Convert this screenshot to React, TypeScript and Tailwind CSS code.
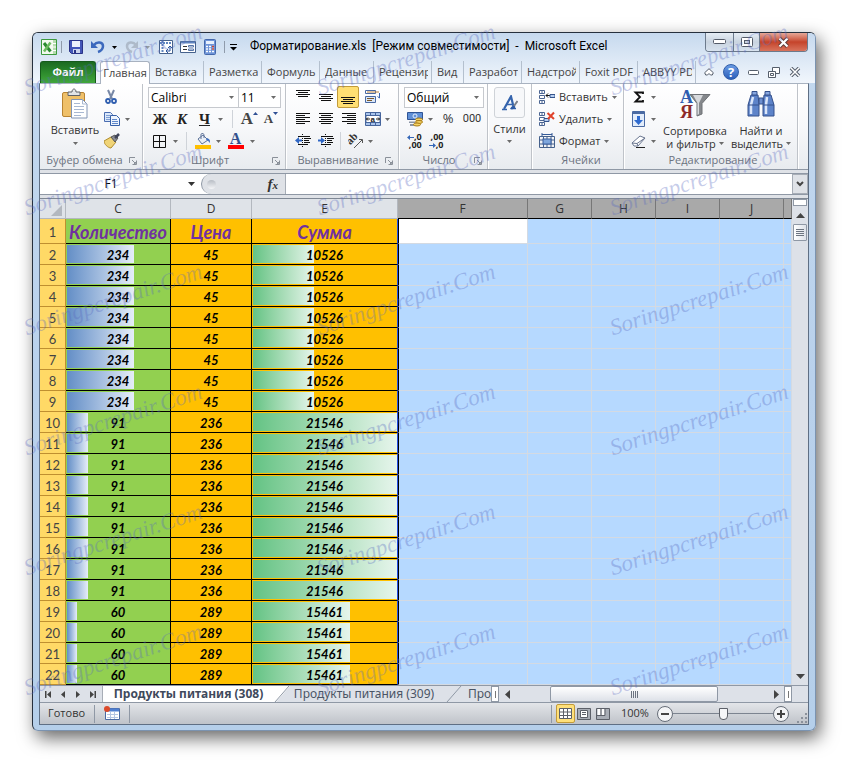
import { ReactNode } from 'react';

interface SheetRow {
  row: number;
  quantity: number;
  price: number;
  total: number;
}

// Data bar width in percent, by value
const quantityBars: Record<number, number> = { 234: 64, 91: 20, 60: 10 };
const totalBars: Record<number, number> = { 10526: 42, 21546: 99, 15461: 67 };

const rows: SheetRow[] = Array.from({ length: 21 }, (_, i) => {
  const row = i + 2;
  if (row < 10) return { row, quantity: 234, price: 45, total: 10526 };
  if (row < 19) return { row, quantity: 91, price: 236, total: 21546 };
  return { row, quantity: 60, price: 289, total: 15461 };
});

function Arrow({ className = '' }: { className?: string }) {
  return (
    <svg className={`w-[5px] h-[3px] shrink-0 ${className}`} viewBox="0 0 5 3" fill="#6b6b6b">
      <path d="M0 0h5L2.5 3z" />
    </svg>
  );
}

function Icon({ children, size = 16 }: { children: ReactNode; size?: number }) {
  return (
    <svg width={size} height={size} viewBox={`0 0 ${size} ${size}`} className="shrink-0" fill="none">
      {children}
    </svg>
  );
}

function IconButton({ label, className = '', children }: { label: string; className?: string; children: ReactNode }) {
  return (
    <button type="button" aria-label={label} className={`flex items-center justify-center shrink-0 h-[22px] ${className}`}>
      {children}
    </button>
  );
}

function Select({ label, value, className = '' }: { label: string; value: string; className?: string }) {
  return (
    <div className={`relative h-[21px] bg-white border border-[#c6c9ce] ${className}`}>
      <select
        aria-label={label}
        className="w-full h-full appearance-none bg-transparent pl-[2px] pr-3 font-['Open_Sans',sans-serif] text-[12px] leading-[19px] text-black"
      >
        <option>{value}</option>
      </select>
      <Arrow className="absolute right-[4px] top-[8px] pointer-events-none" />
    </div>
  );
}

function Divider({ className = 'h-[18px] bg-[#cfd3d9]' }: { className?: string }) {
  return <div className={`w-px shrink-0 ${className}`} />;
}

function Group({ title, className, launcher = false, children }: { title: string; className: string; launcher?: boolean; children: ReactNode }) {
  return (
    <div className={`flex flex-col shrink-0 h-full pt-[2px] border-r border-[#bfc3c9] shadow-[1px_0_0_#fff] ${className}`}>
      <div className="h-[66px]">{children}</div>
      <div className="flex items-center h-[17px] text-[#6b7380]">
        <span className="flex-1 text-center whitespace-nowrap">{title}</span>
        {launcher && (
          <button type="button" aria-label={`${title}: параметры`} className="w-[13px] shrink-0">
            <svg width="8" height="8" viewBox="0 0 8 8" fill="none" stroke="#8a9099">
              <path d="M.5 6V.5H6M3 3l3 3M7.5 3.5v4h-4M6.5 5v1.500H5" />
            </svg>
          </button>
        )}
      </div>
    </div>
  );
}

function Lines({ y, widths, align }: { y: number; widths: number[]; align: 'left' | 'center' | 'right' }) {
  return (
    <Icon>
      {widths.map((w, i) => (
        <rect
          key={i}
          x={align === 'left' ? 1 : align === 'center' ? 8 - w / 2 : 15 - w}
          y={y + i * 2}
          width={w}
          height="1"
          fill="#111"
        />
      ))}
    </Icon>
  );
}

function IndentIcon({ inward = false }: { inward?: boolean }) {
  return (
    <Icon>
      <path d="M3 3.500h12M9 5.500h7M9 7.500h5M9 9.500h6M3 11.500h10" stroke="#111" />
      <path d="M7.500 1v14" stroke="#111" strokeDasharray="1 1" />
      <path d={inward ? 'M0 6.500h3V4L7 7.500 3 11V8.500H0z' : 'M7 6.500H4V4L0 7.500 4 11V8.500h3z'} fill="#2f66c4" />
    </Icon>
  );
}

function CellsIcon({ kind }: { kind: 'insert' | 'delete' | 'format' }) {
  if (kind === 'format') {
    return (
      <Icon>
        <path d="M.5 3.500h15v11H.5zM.5 7h15M.5 11h15M4.500 3v11M8 3v11M12 3v11" stroke="#45618c" />
        <rect x="4" y="6" width="8" height="5" fill="#7fa7dd" stroke="#3a5f9e" />
        <path d="M3 1.500h10M3 0v3M13 0v3" stroke="#345a98" />
      </Icon>
    );
  }
  return (
    <Icon>
      <path d="M.5 1.500h5v3h-5zM.5 6.500h5v3h-5zM.5 11.500h5v3h-5zM3 11.500v3M3 1.500v3" fill="#fff" stroke="#4b6592" />
      {kind === 'insert' ? (
        <>
          <path d="M11 6.500H7m2-2l-2 2 2 2" stroke="#111" />
          <path d="M11 5.500h5v3h-5z" fill="#b9d0f2" stroke="#35548c" />
        </>
      ) : (
        <>
          <path d="M5 7.500h5v3H5z" fill="#b9d0f2" stroke="#35548c" />
          <path d="M8.500 2l6.500 6M15 1.500L9 8" stroke="#e0432b" strokeWidth="2" />
        </>
      )}
    </Icon>
  );
}

function ExcelLogo() {
  return (
    <Icon>
      <path d="M.5.5h15v15H.5z" fill="#f3faf0" stroke="#3d9a3f" />
      <path d="M12 1h3v14h-3z" fill="#b5dcae" />
      <path d="M12 4.500h3M12 8h3M12 11.500h3" stroke="#fff" />
      <path d="M3 4l6.500 8.500" stroke="#2b8a31" strokeWidth="3" />
      <path d="M9.500 3.500L3 12.500" stroke="#6bbb5f" strokeWidth="2.500" />
    </Icon>
  );
}

function TitleBar() {
  return (
    <div className="flex items-start h-[28px] pl-[1px]">
      <div className="flex items-center h-[28px] w-[209px] shrink-0">
        <ExcelLogo />
        <Divider className="h-[12px] ml-[4px] mr-[6px] bg-[#8f9bab]" />
        <button type="button" aria-label="Сохранить" className="mr-[6px]">
          <Icon>
            <path d="M1.500 1.500h13v13h-11l-2-2z" fill="#4456b8" stroke="#2b3487" />
            <path d="M4 2h8v6H4z" fill="#eef2fb" />
            <path d="M5 10h7v4H5z" fill="#cdd5ee" />
            <path d="M6 11h2v3H6z" fill="#2b3487" />
          </Icon>
        </button>
        <button type="button" aria-label="Отменить" className="flex items-center gap-[6px]">
          <Icon>
            <path d="M4 6c3-4 9-3 9 1 0 3-2 5-5 6" stroke="#3c69bd" strokeWidth="2.500" />
            <path d="M1 2v7h7z" fill="#3c69bd" />
          </Icon>
          <svg width="5" height="3" viewBox="0 0 5 3"><path d="M0 0h5L2.500 3z" /></svg>
        </button>
        <button type="button" aria-label="Вернуть" className="flex items-center gap-[5px] ml-[7px] opacity-60">
          <Icon>
            <path d="M12 6c-3-4-9-3-9 1 0 3 2 5 5 6" stroke="#98a2b0" strokeWidth="2.500" />
            <path d="M14 2v7H7z" fill="#98a2b0" />
          </Icon>
          <Arrow />
        </button>
        <button type="button" aria-label="Сводная таблица" className="ml-[8px]">
          <Icon>
            <path d="M1.500 1.500h13v13h-13z" fill="#fff" stroke="#45618c" />
            <path d="M2 4h12M4.500 2v12" stroke="#5f84bf" strokeWidth="2" strokeDasharray="2 1" />
            <path d="M8 12h4V7m-2 2l2-2 2 2M10 10l-2 2 2 2" stroke="#2b549c" />
          </Icon>
        </button>
        <button type="button" aria-label="Форма" className="ml-[6px]">
          <Icon>
            <path d="M.5 2.500h15v11H.5z" fill="#fff" stroke="#45618c" />
            <path d="M1 3.500h14" stroke="#5f84bf" strokeWidth="2" />
            <path d="M3 7.500h4M3 10.500h4" stroke="#333" />
            <path d="M8.500 6.500h5v1.500h-5zM8.500 10h5v1.500h-5z" stroke="#5474a8" />
          </Icon>
        </button>
        <button type="button" aria-label="Калькулятор" className="ml-[6px]">
          <Icon>
            <rect x="2.500" y=".5" width="11" height="15" rx="1" fill="#6f95d8" stroke="#4468ac" />
            <path d="M4 2h8v3H4z" fill="#e9f1fd" />
            <path d="M4 7.500h8M4 10h8M4 12.500h8" stroke="#fff" strokeWidth="1.500" strokeDasharray="2 1" />
            <path d="M10 7.500h2M10 10h2" stroke="#c84432" strokeWidth="1.500" />
          </Icon>
        </button>
        <Divider className="h-[12px] ml-[6px] mr-[5px] bg-[#8f9bab]" />
        <button type="button" aria-label="Настройка панели">
          <svg width="7" height="7" viewBox="0 0 7 7"><path d="M0 0h7v1H0zM0 3h7L3.500 6.500z" /></svg>
        </button>
      </div>
      <h1 className="flex-1 min-w-0 h-[26px] leading-[26px] font-['Roboto',sans-serif] text-[12px] text-black whitespace-pre overflow-hidden">
        Форматирование.xls  [Режим совместимости]  -  Microsoft Excel
      </h1>
      <div className="flex shrink-0 h-[19px] border border-t-0 border-[#6c7a8c] rounded-b-[4px] overflow-hidden">
        <button type="button" aria-label="Свернуть" className="w-[28px] flex items-center justify-center border-r border-[#6c7a8c] bg-linear-to-b from-[#e6edf5] via-[#c9d4e0] to-[#d8e3ef]">
          <svg width="13" height="6" viewBox="0 0 13 6"><rect x=".5" y=".5" width="12" height="4" rx="1" fill="#fff" stroke="#545b68" /></svg>
        </button>
        <button type="button" aria-label="Развернуть" className="w-[26px] flex items-center justify-center border-r border-[#6c7a8c] bg-linear-to-b from-[#e6edf5] via-[#c9d4e0] to-[#d8e3ef]">
          <svg width="12" height="10" viewBox="0 0 12 10"><rect x=".5" y=".5" width="11" height="9" rx="1" fill="#fff" stroke="#545b68" /><rect x="3.500" y="3.500" width="5" height="3" fill="#c9d4e0" stroke="#545b68" /></svg>
        </button>
        <button type="button" aria-label="Закрыть" className="w-[47px] flex items-center justify-center bg-linear-to-b from-[#e5a797] via-[#c5432a] to-[#d8735c]">
          <svg width="13" height="11" viewBox="0 0 13 11"><path d="M2.500 1.500l8 8M10.500 1.500l-8 8" stroke="#5b3a38" strokeWidth="4" /><path d="M2.500 1.500l8 8M10.500 1.500l-8 8" stroke="#fff" strokeWidth="2.200" /></svg>
        </button>
      </div>
    </div>
  );
}

const ribbonTabs = [
  { name: 'Вставка', width: 'w-[54px]' },
  { name: 'Разметка', width: 'w-[58px]' },
  { name: 'Формуль', width: 'w-[58px]' },
  { name: 'Данные', width: 'w-[54px]' },
  { name: 'Рецензир', width: 'w-[58px]' },
  { name: 'Вид', width: 'w-[32px]' },
  { name: 'Разработ', width: 'w-[58px]' },
  { name: 'Надстрой', width: 'w-[58px]' },
  { name: 'Foxit PDF', width: 'w-[58px]' },
  { name: 'ABBYY PD', width: 'w-[58px]' },
];

function RibbonTabs() {
  return (
    <nav className="flex items-end h-[22px] text-[#444]">
      <button type="button" className="w-[56px] h-[22px] mr-[4px] shrink-0 font-bold text-white bg-linear-to-b from-[#1b6a21] via-[#2c8a2c] to-[#41a73c] border border-b-0 border-[#155a1a] rounded-t-[3px]">
        Файл
      </button>
      <button type="button" className="w-[50px] h-[23px] -mb-px shrink-0 bg-white border border-b-0 border-[#a8b2c0] rounded-t-[3px] relative">
        Главная
      </button>
      {ribbonTabs.map((tab) => (
        <button key={tab.name} type="button" className={`h-[22px] pl-[5px] pr-[3px] shrink-0 border-r border-[#b4c0ce] ${tab.width}`}>
          <span className="block overflow-hidden whitespace-nowrap text-left">{tab.name}</span>
        </button>
      ))}
      <div className="flex items-center h-[22px] ml-[8px] gap-[9px]">
        <button type="button" aria-label="Свернуть ленту">
          <svg width="10" height="8" viewBox="0 0 10 8"><path d="M5 .7l4.300 4-1 2.300H6.500L5 5.500 3.500 7H1.700l-1-2.300z" fill="#fff" stroke="#555e6b" /></svg>
        </button>
        <button type="button" aria-label="Справка" className="w-[16px] h-[16px] rounded-full bg-linear-to-b from-[#6a9be3] to-[#2c5fba] border border-[#2f5da8] text-white text-[13px] leading-[14px] font-bold">
          ?
        </button>
        <button type="button" aria-label="Свернуть книгу">
          <svg width="11" height="5" viewBox="0 0 11 5"><rect x=".5" y=".5" width="10" height="4" rx="1" fill="#fff" stroke="#555e6b" /></svg>
        </button>
        <button type="button" aria-label="Восстановить книгу">
          <svg width="12" height="11" viewBox="0 0 12 11" fill="#fff" stroke="#555e6b"><path d="M4.500.5h7v6h-7z" /><path d="M.5 4.500h7v6h-7z" /><path d="M2.500 6.500h3v2h-3z" /></svg>
        </button>
        <button type="button" aria-label="Закрыть книгу">
          <svg width="12" height="10" viewBox="0 0 12 10"><path d="M2 1l8 8M10 1L2 9" stroke="#555e6b" strokeWidth="3.500" /><path d="M2 1l8 8M10 1L2 9" stroke="#fff" strokeWidth="1.500" /></svg>
        </button>
      </div>
    </nav>
  );
}

function ClipboardGroup() {
  return (
    <Group title="Буфер обмена" className="w-[103px]" launcher>
      <div className="flex">
        <button type="button" className="w-[62px] pl-[8px] h-[66px] flex flex-col items-center shrink-0">
          <svg width="28" height="32" viewBox="0 0 28 32" fill="none" className="mt-[2px]">
            <rect x="1.500" y="4.500" width="22" height="24" rx="1.500" fill="#efc069" stroke="#b98432" />
            <path d="M7 7.500V4h4c0-4 4-4 4 0h4v3.500z" fill="#e1e4e8" stroke="#5e6268" />
            <path d="M10.500 11.500h11l4.500 4.500v14H10.500z" fill="#fff" stroke="#8194b4" />
            <path d="M21.500 11.500V16H26M13 15.500h6M13 18.500h10M13 21.500h10M13 24.500h10M13 27.500h7" stroke="#a8b8d2" />
          </svg>
          <span className="leading-[14px] mt-[3px]">Вставить</span>
          <Arrow className="mt-[5px]" />
        </button>
        <div>
          <IconButton label="Вырезать" className="w-[18px]">
            <Icon>
              <path d="M5 1l4 9M11 1L7 10" stroke="#7888a6" strokeWidth="2" />
              <circle cx="5" cy="12" r="2" stroke="#2f5eaf" strokeWidth="1.800" />
              <circle cx="11" cy="12" r="2" stroke="#2f5eaf" strokeWidth="1.800" />
            </Icon>
          </IconButton>
          <IconButton label="Копировать" className="gap-[5px] pl-[2px]">
            <Icon>
              <path d="M.5 1.500h6l2 2v7h-8z" fill="#dbe8fa" stroke="#4a6db0" />
              <path d="M2 4.500h4M2 6.500h4M2 8.500h4" stroke="#7f9fd4" />
              <path d="M6.500 4.500h6l3 3v7h-9z" fill="#eef4fd" stroke="#3760a8" />
              <path d="M8 8.500h5M8 10.500h6M8 12.500h6" stroke="#5f88cb" />
            </Icon>
            <Arrow />
          </IconButton>
          <IconButton label="Формат по образцу" className="w-[20px]">
            <Icon>
              <path d="M0 8l7-4 5 5-5 6c-3 0-7-4-7-7z" fill="#f0d477" stroke="#b08c2c" />
              <path d="M7 4l4-2 3 3-3 4z" fill="#8c8f96" stroke="#555" />
              <path d="M11 5l4-4" stroke="#40455a" strokeWidth="2.500" />
            </Icon>
          </IconButton>
        </div>
      </div>
    </Group>
  );
}

function FontGroup() {
  return (
    <Group title="Шрифт" className="w-[143px] pl-[5px]" launcher>
      <div className="flex h-[22px] items-center">
        <Select label="Шрифт" value="Calibri" className="w-[91px]" />
        <Select label="Размер" value="11" className="w-[43px] -ml-px" />
      </div>
      <div className="flex h-[22px] items-center text-[#222] font-['Liberation_Serif',serif]">
        <IconButton label="Полужирный" className="w-[24px] text-[15px] font-bold">Ж</IconButton>
        <IconButton label="Курсив" className="w-[20px] text-[15px] font-bold italic">К</IconButton>
        <IconButton label="Подчеркнутый" className="w-[38px] gap-[8px] text-[15px] font-bold">
          <span className="underline">Ч</span>
          <Arrow />
        </IconButton>
        <Divider className="h-[18px] bg-[#cfd3d9] ml-[2px]" />
        <IconButton label="Увеличить размер" className="w-[30px] pl-[3px] text-[17px] font-bold text-[#444]">
          A
          <svg width="5" height="3" viewBox="0 0 5 3" className="mb-[12px]"><path d="M0 3h5L2.500 0z" fill="#2f4f94" /></svg>
        </IconButton>
        <IconButton label="Уменьшить размер" className="w-[16px] text-[13px] font-bold text-[#444]">
          A
          <svg width="5" height="3" viewBox="0 0 5 3" className="mb-[12px]"><path d="M0 0h5L2.500 3z" fill="#2f4f94" /></svg>
        </IconButton>
      </div>
      <div className="flex h-[22px] items-center">
        <IconButton label="Границы" className="w-[34px] gap-[7px]">
          <svg width="13" height="13" viewBox="0 0 13 13" fill="none" stroke="#111"><path d="M.5.5h12v12H.5zM6.500 0v13M0 6.500h13" /></svg>
          <Arrow />
        </IconButton>
        <Divider className="h-[18px] bg-[#cfd3d9] ml-[4px]" />
        <IconButton label="Цвет заливки" className="w-[34px] gap-[5px] ml-[4px]">
          <Icon>
            <path d="M3 6l5-4 5 5-6 4z" fill="#e8eef7" stroke="#5e7399" />
            <path d="M6 6V1.500C6 0 9 0 9 2v3" stroke="#5e7399" />
            <path d="M12 5c3 1 3.500 3 2.500 5-1-2-1.500-3-3.500-3z" fill="#3f6fc0" />
            <path d="M0 12h16v4H0z" fill="#ffc000" />
          </Icon>
          <Arrow />
        </IconButton>
        <IconButton label="Цвет текста" className="w-[32px] gap-[6px]">
          <span className="w-[16px] h-[16px] border-b-4 border-[#f00] text-[16px] leading-[12px] font-bold text-[#33518d] font-['Liberation_Serif',serif]">A</span>
          <Arrow />
        </IconButton>
      </div>
    </Group>
  );
}

function AlignmentGroup() {
  return (
    <Group title="Выравнивание" className="w-[113px] pl-[5px]" launcher>
      <div className="flex h-[22px]">
        <IconButton label="По верхнему краю" className="w-[23px]"><Lines y={1} widths={[14, 10, 14, 10]} align="center" /></IconButton>
        <IconButton label="По середине" className="w-[23px]"><Lines y={5} widths={[14, 10, 14, 10]} align="center" /></IconButton>
        <IconButton label="По нижнему краю" className="w-[22px] bg-[#ffdf73] border border-[#c29b3a] rounded-[2px]"><Lines y={8} widths={[14, 10, 14, 10]} align="center" /></IconButton>
        <IconButton label="Перенос текста" className="w-[28px]">
          <Icon>
            <path d="M.5 1.500h10v3H.5z" fill="#fff" stroke="#4a6aa3" />
            <path d="M2 3h12" stroke="#b8813c" />
            <path d="M.5 7.500h10v6H.5z" fill="#dbe7f8" stroke="#4a6aa3" />
            <path d="M2 9.500h7M2 11.500h5" stroke="#7c5a2a" />
            <path d="M14.500 4v5l-2-1.500" stroke="#3b66b0" />
          </Icon>
        </IconButton>
      </div>
      <div className="flex h-[22px]">
        <IconButton label="По левому краю" className="w-[23px]"><Lines y={2} widths={[14, 9, 14, 9, 14, 9]} align="left" /></IconButton>
        <IconButton label="По центру" className="w-[23px]"><Lines y={2} widths={[14, 10, 14, 10, 14, 10]} align="center" /></IconButton>
        <IconButton label="По правому краю" className="w-[23px]"><Lines y={2} widths={[14, 9, 14, 9, 14, 9]} align="right" /></IconButton>
        <IconButton label="Объединить" className="w-[34px] gap-[4px]">
          <Icon>
            <path d="M.5 1.500h15v13H.5z" fill="#a9c4ec" stroke="#46659c" />
            <path d="M1 4.500h14v7H1z" fill="#fff" stroke="#46659c" />
            <path d="M5.500 1.500v3M10.500 1.500v3M5.500 11.500v3M10.500 11.500v3" stroke="#46659c" />
            <path d="M1 8h4M11 8h4M3 6.500L1.500 8 3 9.500M13 6.500L14.500 8 13 9.500" stroke="#222" />
            <text x="5.500" y="10.500" fontSize="8" fontWeight="bold" fill="#222" fontFamily="Liberation Sans">a</text>
          </Icon>
          <Arrow />
        </IconButton>
      </div>
      <div className="flex h-[22px] items-center">
        <IconButton label="Уменьшить отступ" className="w-[23px]"><IndentIcon /></IconButton>
        <IconButton label="Увеличить отступ" className="w-[23px]"><IndentIcon inward /></IconButton>
        <Divider className="h-[18px] bg-[#cfd3d9] ml-[3px] mr-[6px]" />
        <IconButton label="Ориентация" className="w-[26px] gap-[4px]">
          <Icon>
            <text x="0" y="9" fontSize="11" fontWeight="bold" fill="#333" fontFamily="Liberation Serif" transform="rotate(-45 5 8)">ab</text>
            <path d="M6 15l8-8M11 6.500h3.500V10" stroke="#555" />
          </Icon>
          <Arrow />
        </IconButton>
      </div>
    </Group>
  );
}

function NumberGroup() {
  return (
    <Group title="Число" className="w-[89px] pl-[5px]" launcher>
      <div className="flex h-[22px] items-center">
        <Select label="Числовой формат" value="Общий" className="w-[80px]" />
      </div>
      <div className="flex h-[22px] items-center">
        <IconButton label="Денежный формат" className="w-[32px] gap-[5px]">
          <Icon>
            <path d="M.5 1.500h15v7H.5z" fill="#5f8fd6" stroke="#2f5496" />
            <circle cx="8" cy="5" r="2" stroke="#e3edfb" />
            <path d="M2 10.500h6v1.500H2zM3 13h6v2H3z" fill="#8a94a5" />
            <ellipse cx="12" cy="8.500" rx="3.500" ry="1.500" fill="#f5d367" stroke="#a87c17" />
            <ellipse cx="12" cy="11" rx="3.500" ry="1.500" fill="#f5d367" stroke="#a87c17" />
            <ellipse cx="10" cy="13.500" rx="3.500" ry="1.500" fill="#f5d367" stroke="#a87c17" />
          </Icon>
          <Arrow />
        </IconButton>
        <IconButton label="Процентный формат" className="w-[24px] text-[13px] text-[#333]">%</IconButton>
        <IconButton label="Формат с разделителями" className="w-[24px] text-[#333] font-['Roboto',sans-serif]">000</IconButton>
      </div>
      <div className="flex h-[22px] items-center gap-[7px] pl-[3px] text-[9px] leading-[8px] text-[#222]">
        <IconButton label="Увеличить разрядность" className="flex-col items-end">
          <span className="flex items-center font-bold">
            <svg width="7" height="5" viewBox="0 0 7 5"><path d="M0 2.500L3 0v2h4v1H3v2z" fill="#3567b8" /></svg>,0
          </span>
          <span className="font-bold">,00</span>
        </IconButton>
        <IconButton label="Уменьшить разрядность" className="flex-col items-end">
          <span className="font-bold">,00</span>
          <span className="flex items-center font-bold">
            <svg width="7" height="5" viewBox="0 0 7 5"><path d="M7 2.500L4 0v2H0v1h4v2z" fill="#3567b8" /></svg>,0
          </span>
        </IconButton>
      </div>
    </Group>
  );
}

function StylesGroup() {
  return (
    <Group title="" className="w-[44px]">
      <button type="button" className="flex flex-col items-center w-full">
        <span className="flex items-center justify-center w-[31px] h-[31px] mt-px bg-[#f7f8fa] border border-[#cfd3d8] rounded-[3px]">
          <Icon>
            <path d="M2 14L9 1.500l3 12" stroke="#3564ad" strokeWidth="2.200" />
            <path d="M0 14.500h5M9 13.500h5M5 9.500h6" stroke="#3564ad" strokeWidth="1.500" />
            <path d="M8 14c1-3 4-4 5-3 1 2-2 4-5 3z" fill="#2d5aa5" />
            <path d="M12 11l3.500-5" stroke="#7d828c" strokeWidth="2" />
          </Icon>
        </span>
        <span className="mt-[4px] leading-[14px]">Стили</span>
        <Arrow className="mt-[4px]" />
      </button>
    </Group>
  );
}

function CellsGroup() {
  return (
    <Group title="Ячейки" className="w-[92px] pl-[7px]">
      <button type="button" className="flex items-center h-[22px] gap-[4px]"><CellsIcon kind="insert" />Вставить<Arrow /></button>
      <button type="button" className="flex items-center h-[22px] gap-[4px]"><CellsIcon kind="delete" />Удалить<Arrow /></button>
      <button type="button" className="flex items-center h-[22px] gap-[4px]"><CellsIcon kind="format" />Формат<Arrow /></button>
    </Group>
  );
}

function EditingGroup() {
  return (
    <Group title="Редактирование" className="w-[174px] pl-[5px]">
      <div className="flex">
        <div className="w-[32px] shrink-0">
          <IconButton label="Сумма" className="w-[28px] gap-[4px]">
            <Icon><path d="M12 5V3.500H4.500L9 8l-4.500 4.500H12V11" stroke="#111" strokeWidth="1.800" /></Icon>
            <Arrow />
          </IconButton>
          <IconButton label="Заполнить" className="w-[28px] gap-[4px]">
            <Icon>
              <path d="M1.500.5h12v15h-12z" fill="#e3edfb" stroke="#4a6aa3" />
              <path d="M2 2h11" stroke="#4a6aa3" strokeWidth="2" />
              <path d="M6 5h3v4h3l-4.500 5L3 9h3z" fill="#2f6bd0" />
            </Icon>
            <Arrow />
          </IconButton>
          <IconButton label="Очистить" className="w-[28px] gap-[4px]">
            <Icon>
              <path d="M1 10l8-7 5 2-7 8H3z" fill="#fff" stroke="#6a7690" />
              <path d="M1 10l5 .5 8-5.500M6 10.500l1 2.500" stroke="#6a7690" />
              <path d="M5 14.500h9" stroke="#222" />
            </Icon>
            <Arrow />
          </IconButton>
        </div>
        <button type="button" className="w-[68px] h-[66px] shrink-0 flex flex-col items-center">
          <svg width="32" height="32" viewBox="0 0 32 32" fill="none" className="mt-[2px] shrink-0">
            <path d="M11 6.500h20l-8 9V26l-5 2V15.500z" fill="#85888c" stroke="#6f7276" />
            <path d="M14 7h10l-4 8v11l-1.500 1V15z" fill="#d8dadd" />
            <text x="1" y="15" fontSize="18" fontWeight="bold" fill="#2f5db0" fontFamily="Liberation Serif">А</text>
            <text x="1" y="30" fontSize="18" fontWeight="bold" fill="#8d2a2a" fontFamily="Liberation Serif">Я</text>
          </svg>
          <span className="leading-[13px] mt-[4px] whitespace-nowrap">Сортировка</span>
          <span className="flex items-center gap-[3px] leading-[13px] whitespace-nowrap">и фильтр<Arrow /></span>
        </button>
        <button type="button" className="w-[64px] h-[66px] shrink-0 flex flex-col items-center">
          <svg width="28" height="26" viewBox="0 0 28 26" fill="none" className="mt-[5px] mb-[7px] shrink-0">
            <path d="M4 4h7l1 9v12H1V14z" fill="#5d83c9" stroke="#34508c" />
            <path d="M24 4h-7l-1 9v12h11V14z" fill="#5d83c9" stroke="#34508c" />
            <path d="M5 .5h5V4H5zM18 .5h5V4h-5z" fill="#86a5de" stroke="#34508c" />
            <path d="M12 7h4v6h-4z" fill="#6d8fd0" stroke="#34508c" />
            <path d="M6 6L4 14v9M20 6l-1 8v9" stroke="#dbe6fa" strokeWidth="2.500" />
            <path d="M1 14h11M16 14h11" stroke="#34508c" />
          </svg>
          <span className="leading-[13px] whitespace-nowrap">Найти и</span>
          <span className="flex items-center gap-[3px] leading-[13px] whitespace-nowrap">выделить<Arrow /></span>
        </button>
      </div>
    </Group>
  );
}

function FormulaBar() {
  return (
    <div className="flex h-[22px] mt-[3px] border-y border-[#8f98a5] bg-[#dfe2e7]">
      <div className="flex items-center w-[161px] shrink-0 bg-white">
        <input aria-label="Имя" defaultValue="F1" className="w-[142px] text-center text-[12px] text-black bg-transparent" />
        <svg width="7" height="4" viewBox="0 0 7 4" className="ml-[6px]"><path d="M0 0h7L3.500 4z" fill="#333" /></svg>
      </div>
      <div className="w-[85px] shrink-0 bg-white border-r border-[#a7adb6]">
        <div className="flex items-center justify-between h-full pl-[5px] pr-[7px] bg-[#dfe2e7] rounded-l-full border-l border-[#8f98a5]">
          <span className="w-[9px] h-[9px] rounded-full bg-linear-to-b from-[#b8bdc5] to-[#f5f6f8]" />
          <button type="button" aria-label="Вставить функцию" className="font-['Liberation_Serif',serif] italic font-bold text-[15px] leading-[18px] text-[#333]">
            f<span className="text-[11px]">x</span>
          </button>
        </div>
      </div>
      <input aria-label="Строка формул" className="flex-1 min-w-0 bg-white" />
      <button type="button" aria-label="Развернуть строку формул" className="flex items-center justify-center w-[16px] shrink-0 bg-[#dfe2e7] border border-[#a7adb6]">
        <svg width="8" height="6" viewBox="0 0 8 6" fill="none"><path d="M1 1l3 3 3-3" stroke="#444" strokeWidth="2" /></svg>
      </button>
    </div>
  );
}

function BarCell({ value, percent, kind }: { value: number; percent: number; kind: 'quantity' | 'total' }) {
  const cell = kind === 'quantity' ? 'bg-[#92d050] border-black' : 'bg-[#ffc000] border-r-[#2450e6] border-b-black';
  const bar = kind === 'quantity' ? 'from-[#638ec6] to-[#e6edf7]' : 'from-[#63c384] to-[#e6f5ec]';
  return (
    <td className={`relative p-0 pt-[2px] border-r border-b ${cell}`}>
      <div className={`absolute left-px top-px bottom-px bg-linear-to-r ${bar}`} style={{ width: `${percent}%` }} />
      <span className="relative">{value}</span>
    </td>
  );
}

function EmptyCells({ first = false }: { first?: boolean }) {
  return (
    <>
      <td className={`p-0 border-l border-r border-b border-l-black border-r-[#d4dae2] border-b-[#d4dae2] ${first ? 'bg-white' : 'bg-[#b6d9ff]'}`} />
      {['G', 'H', 'I', 'J', 'K'].map((col) => (
        <td key={col} className="p-0 bg-[#b6d9ff] border-r border-b border-[#d4dae2]" />
      ))}
    </>
  );
}

function Sheet() {
  const rowHeader = 'p-0 pt-[2px] bg-[#ffd966] border-r border-b border-[#bf8f30] font-normal text-[#444]';
  return (
    <table className="flex-1 min-w-0 table-fixed w-full border-separate border-spacing-0 text-center">
      <colgroup>
        <col className="w-[26px]" />
        <col className="w-[105px]" />
        <col className="w-[81px]" />
        <col className="w-[146px]" />
        <col className="w-[130px]" />
        <col className="w-[64px]" />
        <col className="w-[64px]" />
        <col className="w-[64px]" />
        <col className="w-[64px]" />
        <col />
      </colgroup>
      <thead className="text-[12px] leading-[19px] text-[#333]">
        <tr className="h-[20px]">
          <td className="p-0 bg-[#dfe3e8] border-r border-b border-[#b3b8bf]">
            <svg width="11" height="11" viewBox="0 0 11 11" className="ml-auto mr-[3px] mt-[3px]"><path d="M11 0v11H0z" fill="#b3b8bf" /></svg>
          </td>
          {['C', 'D', 'E'].map((col) => (
            <th key={col} className="p-0 font-normal bg-[#dfe3e8] border-r border-b border-[#b3b8bf]">{col}</th>
          ))}
          {['F', 'G', 'H', 'I', 'J', ''].map((col) => (
            <th key={col} className="p-0 font-normal bg-[#a9a9a9] border-r border-b border-r-[#777] border-b-black">{col}</th>
          ))}
        </tr>
      </thead>
      <tbody className="font-['Lato',sans-serif] text-[13px] leading-[18px] text-black">
        <tr className="h-[25px] font-bold italic text-[18px] leading-[22px] text-[#7030a0]">
          <th className={`${rowHeader} not-italic text-[13px]`}>1</th>
          <td className="p-0 pt-[2px] bg-[#92d050] border-r border-b border-black">Количество</td>
          <td className="p-0 pt-[2px] bg-[#ffc000] border-r border-b border-black">Цена</td>
          <td className="p-0 pt-[2px] bg-[#ffc000] border-r border-b border-r-[#2450e6] border-b-black">Сумма</td>
          <EmptyCells first />
        </tr>
        {rows.map((item) => (
          <tr key={item.row} className="h-[21px] font-bold italic">
            <th className={`${rowHeader} not-italic`}>{item.row}</th>
            <BarCell kind="quantity" value={item.quantity} percent={quantityBars[item.quantity]} />
            <td className="p-0 pt-[2px] bg-[#ffc000] border-r border-b border-black">{item.price}</td>
            <BarCell kind="total" value={item.total} percent={totalBars[item.total]} />
            <EmptyCells />
          </tr>
        ))}
      </tbody>
    </table>
  );
}

function VerticalScrollbar() {
  return (
    <div className="flex flex-col items-center w-[16px] shrink-0 bg-[#dde1e8]">
      <button type="button" aria-label="Разделить окно" className="w-[14px] h-[7px] shrink-0 bg-white border border-[#8f98a5]" />
      <button type="button" aria-label="Вверх" className="flex items-center justify-center h-[18px] shrink-0">
        <svg width="9" height="5" viewBox="0 0 9 5"><path d="M0 5h9L4.500 0z" fill="#444" /></svg>
      </button>
      <div className="flex flex-col items-center justify-center gap-px w-[14px] h-[17px] shrink-0 bg-linear-to-r from-white to-[#dde1e8] border border-[#8f98a5] rounded-[1px]">
        {[0, 1, 2, 3].map((i) => <span key={i} className="w-[8px] h-px bg-[#6c7480]" />)}
      </div>
      <div className="flex-1" />
      <button type="button" aria-label="Вниз" className="flex items-center justify-center h-[17px] shrink-0">
        <svg width="9" height="5" viewBox="0 0 9 5"><path d="M0 0h9L4.500 5z" fill="#444" /></svg>
      </button>
    </div>
  );
}

const navArrows = [
  { label: 'Первый лист', path: 'M0 0h1.500v7H0zM6 0v7L2 3.500z' },
  { label: 'Предыдущий лист', path: 'M5 0v7L1 3.500z' },
  { label: 'Следующий лист', path: 'M1 0v7l4-3.500z' },
  { label: 'Последний лист', path: 'M4.500 0H6v7H4.500zM0 0v7l4-3.500z' },
];

function SheetTabs() {
  return (
    <div className="flex h-[17px] bg-[#dde1e8] border-t border-[#8f98a5] text-[12px] leading-[16px] text-[#4b5566]">
      <div className="flex items-center justify-around w-[63px] pr-[2px] shrink-0 border-r border-[#a7adb6]">
        {navArrows.map((arrow) => (
          <button key={arrow.label} type="button" aria-label={arrow.label}>
            <svg width="6" height="7" viewBox="0 0 6 7" className="block"><path d={arrow.path} fill="#444" /></svg>
          </button>
        ))}
      </div>
      <div className="flex w-[388px] shrink-0 overflow-hidden whitespace-nowrap font-['Noto_Sans',sans-serif]">
        <button type="button" className="w-[171px] shrink-0 bg-white text-center font-bold text-[#3f4a5c]">Продукты питания (308)</button>
        <svg width="16" height="16" viewBox="0 0 16 16" className="shrink-0"><path d="M0 0h16L2 16H0z" fill="#fff" /><path d="M15 0L1 16" stroke="#8f98a5" /></svg>
        <button type="button" className="w-[150px] pr-[2px] shrink-0 text-center">Продукты питания (309)</button>
        <svg width="16" height="16" viewBox="0 0 16 16" className="ml-[6px] shrink-0"><path d="M15 0L1 16" stroke="#8f98a5" /></svg>
        <button type="button" className="pl-[6px]">Продукты питания (310)</button>
      </div>
      <div className="w-[8px] shrink-0 bg-white border border-[#8f98a5] flex items-center justify-center"><span className="w-px h-[7px] bg-[#777]" /></div>
      <div className="flex flex-1 min-w-0 items-center">
        <button type="button" aria-label="Влево" className="w-[16px] flex justify-center shrink-0">
          <svg width="5" height="9" viewBox="0 0 5 9"><path d="M5 0v9L0 4.500z" fill="#444" /></svg>
        </button>
        <div className="flex-[35]" />
        <div className="flex flex-[167] items-center justify-center gap-px h-[16px] bg-linear-to-b from-white to-[#dde1e8] border border-[#8f98a5] rounded-[2px]">
          {[0, 1, 2, 3].map((i) => <span key={i} className="w-px h-[7px] bg-[#6c7480]" />)}
        </div>
        <div className="flex-[50]" />
        <button type="button" aria-label="Вправо" className="w-[16px] flex justify-center shrink-0">
          <svg width="5" height="9" viewBox="0 0 5 9"><path d="M0 0v9l5-4.500z" fill="#444" /></svg>
        </button>
      </div>
      <div className="w-[8px] mr-[16px] shrink-0 bg-white border border-[#8f98a5] flex items-center justify-center"><span className="w-px h-[7px] bg-[#777]" /></div>
    </div>
  );
}

function StatusBar() {
  return (
    <footer className="flex items-center h-[22px] pl-[8px] bg-linear-to-b from-[#e3e5e9] to-[#bfc3c9] border-t border-[#8f98a5] text-[#333]">
      <span className="w-[46px]">Готово</span>
      <Divider className="h-[18px] bg-[#8f98a5] mr-[9px]" />
      <button type="button" aria-label="Запись макроса">
        <Icon>
          <path d="M1.500 2.500h14v11h-14z" fill="#fff" stroke="#4a6aa3" />
          <path d="M2 4h13" stroke="#4f7fd0" strokeWidth="3" />
          <path d="M3 8.500h11M3 11.500h11M6.500 6v7M10.500 6v7" stroke="#b4c5e2" />
          <circle cx="3" cy="3" r="3" fill="#db4a2b" />
        </Icon>
      </button>
      <Divider className="h-[18px] bg-[#8f98a5] ml-[9px]" />
      <div className="flex-1" />
      <Divider className="h-[18px] bg-[#8f98a5]" />
      <button type="button" aria-label="Обычный" className="flex items-center justify-center shrink-0 w-[19px] h-[19px] ml-[4px] bg-[#ffe07a] border border-[#c29b3a] rounded-[2px]">
        <svg width="13" height="11" viewBox="0 0 13 11" stroke="#5c6068" fill="#fff"><path d="M.5.5h12v10H.5zM.5 4h12M.5 7.500h12M4.500 0v11M8.500 0v11" /></svg>
      </button>
      <IconButton label="Разметка страницы" className="w-[18px]">
        <svg width="14" height="12" viewBox="0 0 14 12" stroke="#5c6068" fill="#a8adb5"><path d="M.5.5h13v11H.5z" /><path d="M3.500 2.500h7v7h-7z" fill="#fff" /><path d="M5 4.500h4M5 6.500h4" /></svg>
      </IconButton>
      <IconButton label="Страничный режим" className="w-[20px]">
        <svg width="14" height="12" viewBox="0 0 14 12" stroke="#5c6068" fill="#a8adb5"><path d="M.5.5h13v11H.5z" /><path d="M1.500 1h3v6h-3zM5.500 1h3v6h-3z" fill="#fff" stroke="none" /><path d="M5 0v7.500M9 0v7.500H0" fill="none" /></svg>
      </IconButton>
      <span className="w-[44px] pl-[8px]">100%</span>
      <button type="button" aria-label="Уменьшить" className="shrink-0">
        <svg width="16" height="16" viewBox="0 0 16 16" className="block"><circle cx="8" cy="8" r="7.500" fill="#f3f4f6" stroke="#666d78" /><path d="M4 8h8" stroke="#444" strokeWidth="2" /></svg>
      </button>
      <input
        type="range"
        aria-label="Масштаб"
        defaultValue={50}
        className="w-[100px] h-[16px] appearance-none bg-[linear-gradient(#7c8490,#7c8490)] bg-[length:100%_1px] bg-no-repeat bg-center [&::-webkit-slider-thumb]:appearance-none [&::-webkit-slider-thumb]:w-[9px] [&::-webkit-slider-thumb]:h-[12px] [&::-webkit-slider-thumb]:bg-[#f5f6f8] [&::-webkit-slider-thumb]:border [&::-webkit-slider-thumb]:border-[#5c6068] [&::-webkit-slider-thumb]:rounded-b-[4px]"
      />
      <button type="button" aria-label="Увеличить" className="shrink-0">
        <svg width="16" height="16" viewBox="0 0 16 16" className="block"><circle cx="8" cy="8" r="7.500" fill="#f3f4f6" stroke="#666d78" /><path d="M4 8h8M8 4v8" stroke="#444" strokeWidth="2" /></svg>
      </button>
      <svg width="11" height="11" viewBox="0 0 11 11" className="self-end ml-[8px] shrink-0" fill="#8b919b">
        <path d="M8 0h2v2H8zM8 4h2v2H8zM8 8h2v2H8zM4 4h2v2H4zM4 8h2v2H4zM0 8h2v2H0z" />
      </svg>
    </footer>
  );
}

function Watermark() {
  return (
    <div aria-hidden="true" className="absolute inset-0 overflow-hidden pointer-events-none grid grid-cols-[293px_293px_1fr] auto-rows-[120px] pl-[17px]">
      {Array.from({ length: 18 }, (_, i) => (
        <div key={i} className="flex items-center w-[192px] justify-center">
          <span className="-rotate-18 whitespace-nowrap font-['Liberation_Serif',serif] italic text-[23px] text-[#5a6bc0]/35">
            Soringpcrepair.Com
          </span>
        </div>
      ))}
    </div>
  );
}

export default function App() {
  return (
    <div className="relative min-h-screen p-8 bg-white font-['Open_Sans',sans-serif] text-[11px] text-[#333]">
      <div className="border border-[#26303d] border-r-[#7b93b0] border-b-[#7b93b0] rounded-[6px] px-[6px] pb-[5px] bg-linear-to-b from-[#c3d8ee] via-[#b9d1ec] to-[#b5cfea] shadow-[4px_7px_18px_rgba(0,0,0,0.6)]">
        <div className="-mx-[6px] px-[7px] rounded-t-[5px] bg-linear-to-b from-[#c6d9ee] to-[#f1f6fc]">
          <TitleBar />
          <RibbonTabs />
        </div>
        <main className="border border-[#5f6f84] border-t-[#a8b2c0] bg-[#dfe2e7]">
          <div className="flex h-[86px] bg-linear-to-b from-white via-[#f7f8fa] to-[#e8ebef] border-b border-[#8f98a5] overflow-hidden">
            <ClipboardGroup />
            <FontGroup />
            <AlignmentGroup />
            <NumberGroup />
            <StylesGroup />
            <CellsGroup />
            <EditingGroup />
          </div>
          <FormulaBar />
          <div className="flex mt-[3px] border-t border-[#7f8894]">
            <Sheet />
            <VerticalScrollbar />
          </div>
          <SheetTabs />
          <StatusBar />
        </main>
      </div>
      <Watermark />
    </div>
  );
}
